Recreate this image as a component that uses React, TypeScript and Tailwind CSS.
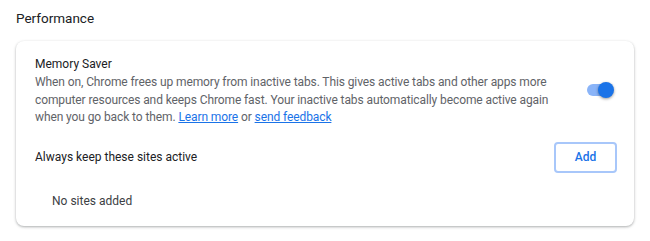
export default function App() {
  return (
    <div className="w-[650px] h-[241px] bg-white font-['Roboto',sans-serif] text-[#202124]">
      <h2 className="pl-4 pt-[8px] text-[13.5px] leading-[20px]">Performance</h2>
      <div className="mx-4 mt-[13px] rounded-lg bg-white shadow-[0_1px_3px_rgba(60,64,67,0.3),0_1px_2px_rgba(60,64,67,0.15)]">
        <div className="flex items-center pl-[19px] pr-5 pt-[13px]">
          <div className="w-[525px] shrink-0">
            <div className="text-[12px] leading-[20px]">Memory Saver</div>
            <p className="text-[12px] leading-[17.5px] tracking-[-0.1px] text-[#5f6368]">
              When on, Chrome frees up memory from inactive tabs. This gives active tabs and other apps more
              computer resources and keeps Chrome fast. Your inactive tabs automatically become active again
              when you go back to them.{' '}
              <a className="text-[#1a73e8] underline">Learn more</a> or{' '}
              <a className="text-[#1a73e8] underline">send feedback</a>
            </p>
          </div>
          <div className="relative ml-auto mr-[1px] h-[12px] w-[26px] shrink-0 rounded-full bg-[#8ab4f8]">
            <span className="absolute -right-[1px] top-1/2 h-4 w-4 -translate-y-1/2 rounded-full bg-[#1a73e8] shadow-[0_1px_3px_rgba(0,0,0,0.4)]" />
          </div>
        </div>
        <div className="mt-[15px] flex items-center justify-between pl-[19px] pr-[17px]">
          <span className="text-[12px]">Always keep these sites active</span>
          <button className="h-[31px] w-[63px] rounded-[4px] border-2 border-[#a8c7fa] text-[12px] font-medium text-[#1a73e8]">
            Add
          </button>
        </div>
        <div className="pl-[36px] pb-[15px] pt-[18px] text-[12px] leading-[20px] text-[#3c4043]">No sites added</div>
      </div>
    </div>
  );
}
